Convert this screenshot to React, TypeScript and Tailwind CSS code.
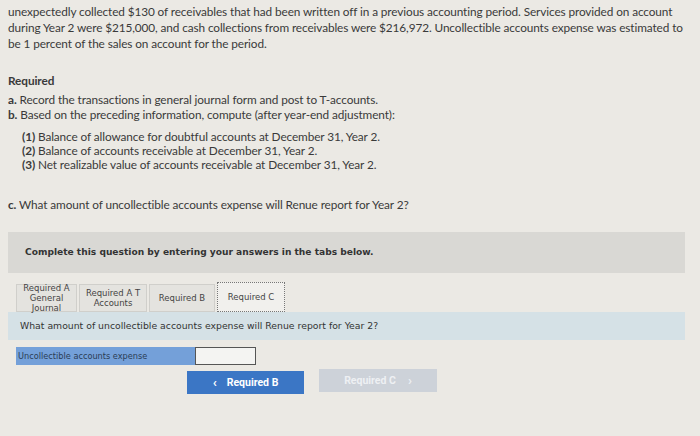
import React from "react";

export default function App() {
  return (
    <div className="w-[700px] h-[436px] overflow-hidden bg-[#ebe9e4] text-[#3a3a3a]" style={{ fontFamily: "Lato, 'Open Sans', sans-serif" }}>
      <div className="pt-[4px] pl-[8px] pr-[4px] text-[11.8px] leading-[16px] tracking-[-0.1px] whitespace-nowrap">
        <p>unexpectedly collected $130 of receivables that had been written off in a previous accounting period. Services provided on account<br />during Year 2 were $215,000, and cash collections from receivables were $216,972. Uncollectible accounts expense was estimated to<br />be 1 percent of the sales on account for the period.</p>
        <p className="mt-[21px] font-bold">Required</p>
        <div className="mt-[3px] leading-[15px]">
          <p><b>a.</b> Record the transactions in general journal form and post to T-accounts.</p>
          <p><b>b.</b> Based on the preceding information, compute (after year-end adjustment):</p>
        </div>
        <div className="mt-[8px] pl-[14px] leading-[14px]">
          <p><b>(1)</b> Balance of allowance for doubtful accounts at December 31, Year 2.</p>
          <p><b>(2)</b> Balance of accounts receivable at December 31, Year 2.</p>
          <p><b>(3)</b> Net realizable value of accounts receivable at December 31, Year 2.</p>
        </div>
        <p className="mt-[25px]"><b>c.</b> What amount of uncollectible accounts expense will Renue report for Year 2?</p>
      </div>

      <div className="ml-[8px] w-[677px]" style={{ fontFamily: "'DejaVu Sans', Verdana, sans-serif" }}>
        <div className="mt-[19px] h-[41px] bg-[#d9d8d4] flex items-center pl-[17px]">
          <span className="text-[9.1px] font-bold text-[#333]">Complete this question by entering your answers in the tabs below.</span>
        </div>
        <div className="mt-[9px] flex items-end pl-[8px] gap-[2px] text-[8.5px] leading-[10px] text-[#444]">
          <div className="w-[61px] h-[28px] bg-[#e4e3df] border border-[#d0cfcb] flex flex-col items-center justify-center text-center">
            <span>Required A</span><span>General</span><span>Journal</span>
          </div>
          <div className="w-[68px] h-[28px] bg-[#e4e3df] border border-[#d0cfcb] flex flex-col items-center justify-center text-center">
            <span>Required A T</span><span>Accounts</span>
          </div>
          <div className="w-[66px] h-[28px] bg-[#e4e3df] border border-[#d0cfcb] flex items-center justify-center">
            <span>Required B</span>
          </div>
          <div className="w-[68px] h-[30px] bg-[#f1f0ed] border border-dotted border-[#777] flex items-center justify-center">
            <span>Required C</span>
          </div>
        </div>
        <div className="h-[28px] bg-[#d5e1e6] flex items-center pl-[12px] text-[9.3px] text-[#333]">
          What amount of uncollectible accounts expense will Renue report for Year 2?
        </div>
        <div className="mt-[7px] ml-[8px] flex h-[18px]">
          <div className="w-[179px] bg-[#74a0d9] flex items-center pl-[2px] text-[8.2px] text-[#2b3d55]">Uncollectible accounts expense</div>
          <div className="w-[61px] bg-[#f4f4f2] border border-[#555]"></div>
        </div>
        <div className="mt-[6px] flex items-start gap-[15px] pl-[179px]">
          <div className="w-[117px] h-[23px] bg-[#3b76c5] text-white flex items-center justify-center gap-[10px] text-[10.5px] font-bold" style={{ fontFamily: "Roboto, Arial, sans-serif" }}>
            <span className="text-[13px] leading-[13px]">‹</span><span>Required B</span>
          </div>
          <div className="-mt-[2px] w-[118px] h-[23px] bg-[#cdd2d9] text-[#eef0f3] flex items-center justify-center gap-[12px] text-[10.5px] font-bold" style={{ fontFamily: "Roboto, Arial, sans-serif" }}>
            <span>Required C</span><span className="text-[13px] leading-[13px]">›</span>
          </div>
        </div>
      </div>
    </div>
  );
}
